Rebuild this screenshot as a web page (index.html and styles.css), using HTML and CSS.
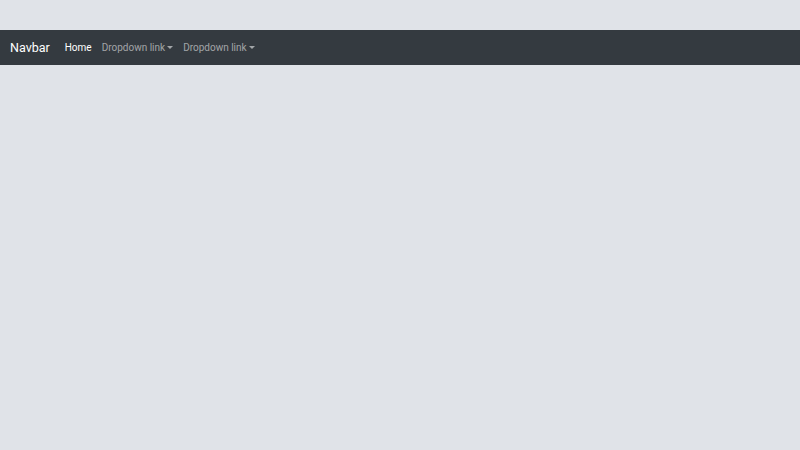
FILE: index.html
```html
<!DOCTYPE html>
<html lang="en">
<head>
<meta charset="utf-8">
<title>Navbar</title>
<link rel="stylesheet" href="styles.css">
</head>
<body>
<div class="top-space"></div>
<nav class="navbar">
  <a class="brand" href="#">Navbar</a>
  <ul class="nav">
    <li><a class="nav-link active" href="#">Home</a></li>
    <li><a class="nav-link dropdown" href="#">Dropdown link</a></li>
    <li><a class="nav-link dropdown" href="#">Dropdown link</a></li>
  </ul>
</nav>
</body>
</html>
```
FILE: styles.css
```css
html, body {
  margin: 0;
  padding: 0;
  background: #e0e3e8;
  font-family: Roboto, "Liberation Sans", sans-serif;
}
.top-space {
  height: 30px;
}
.navbar {
  height: 35px;
  background: #343a40;
  display: flex;
  align-items: center;
  padding: 0 10px;
  box-sizing: border-box;
}
.brand {
  color: #fff;
  text-decoration: none;
  font-size: 12.5px;
  margin-right: 10px;
}
.nav {
  list-style: none;
  margin: 0;
  padding: 0;
  display: flex;
  align-items: center;
}
.nav-link {
  display: block;
  color: rgba(255, 255, 255, 0.55);
  text-decoration: none;
  font-size: 10px;
  padding: 0 5px;
}
.nav-link.active {
  color: #fff;
}
.dropdown::after {
  content: "";
  display: inline-block;
  width: 0;
  height: 0;
  margin-left: 2px;
  vertical-align: 2px;
  border-top: 3px solid currentColor;
  border-left: 3px solid transparent;
  border-right: 3px solid transparent;
}
```
